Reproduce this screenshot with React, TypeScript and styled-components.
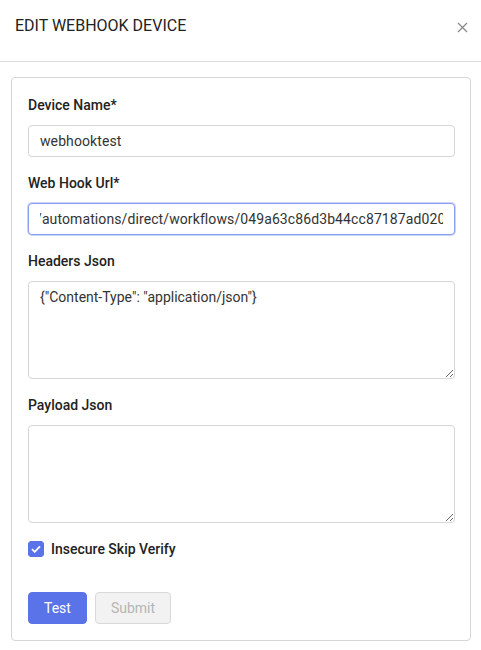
import { FC, useState } from 'react';
import styled, { createGlobalStyle } from 'styled-components';

const GlobalStyle = createGlobalStyle`
  body {
    margin: 0;
    background: #ffffff;
    font-family: Roboto, 'Liberation Sans', Arial, sans-serif;
    color: #222;
  }
  * {
    box-sizing: border-box;
  }
`;

const WEBHOOK_URL = '/automations/direct/workflows/049a63c86d3b44cc87187ad0205c1e7f';

const App: FC = () => {
  const [name, setName] = useState('webhooktest');
  const [url, setUrl] = useState(WEBHOOK_URL);
  const [headers, setHeaders] = useState('{"Content-Type": "application/json"}');
  const [payload, setPayload] = useState('');
  const [skipVerify, setSkipVerify] = useState(true);

  return (
    <>
      <GlobalStyle />
      <StyledHeader>
        <StyledTitle>EDIT WEBHOOK DEVICE</StyledTitle>
        <StyledClose aria-label="close">
          <svg width="11" height="11" viewBox="0 0 11 11">
            <path d="M1 1L10 10M10 1L1 10" stroke="#8a8a8a" strokeWidth="1.3" />
          </svg>
        </StyledClose>
      </StyledHeader>
      <StyledCard>
        <StyledField>
          <StyledLabel>Device Name*</StyledLabel>
          <StyledInput value={name} onChange={e => setName(e.target.value)} />
        </StyledField>
        <StyledField>
          <StyledLabel>Web Hook Url*</StyledLabel>
          <StyledInput focused indent={-4} value={url} onChange={e => setUrl(e.target.value)} />
        </StyledField>
        <StyledField>
          <StyledLabel>Headers Json</StyledLabel>
          <StyledTextArea value={headers} onChange={e => setHeaders(e.target.value)} />
        </StyledField>
        <StyledField>
          <StyledLabel>Payload Json</StyledLabel>
          <StyledTextArea value={payload} onChange={e => setPayload(e.target.value)} />
        </StyledField>
        <StyledCheckRow onClick={() => setSkipVerify(!skipVerify)}>
          <StyledCheckBox checked={skipVerify}>
            {skipVerify && (
              <svg width="10" height="8" viewBox="0 0 10 8">
                <path d="M1 4.2L3.7 6.8L9 1.3" stroke="#fff" strokeWidth="1.8" fill="none" />
              </svg>
            )}
          </StyledCheckBox>
          <StyledCheckLabel>Insecure Skip Verify</StyledCheckLabel>
        </StyledCheckRow>
        <StyledActions>
          <StyledButton variant="primary">Test</StyledButton>
          <StyledButton variant="disabled" disabled>
            Submit
          </StyledButton>
        </StyledActions>
      </StyledCard>
    </>
  );
};

export default App;

const StyledHeader = styled.div`
  display: flex;
  align-items: center;
  justify-content: space-between;
  height: 62px;
  padding: 0 12px 10px 15px;
  border-bottom: 1px solid #dcdcdc;
`;

const StyledTitle = styled.h1`
  margin: 0;
  font-size: 16px;
  font-weight: 400;
  color: #222;
`;

const StyledClose = styled.div`
  display: flex;
  align-items: center;
  justify-content: center;
  width: 14px;
  height: 14px;
  margin-top: 3px;
  cursor: pointer;
`;

const StyledCard = styled.div`
  margin: 15px 10px 10px 11px;
  padding: 17px 15px 16px 16px;
  border: 1px solid #d6d6d6;
  border-radius: 4px;
`;

const StyledField = styled.div`
  display: flex;
  flex-direction: column;
  gap: 10px;
  margin-bottom: 16px;
`;

const StyledLabel = styled.label`
  font-size: 14px;
  line-height: 20px;
  font-weight: 500;
  color: #222;
`;

const StyledInput = styled.input<{ focused?: boolean; indent?: number }>`
  height: 32px;
  width: 100%;
  padding: 0 11px;
  font-family: inherit;
  font-size: 14px;
  letter-spacing: 0.1px;
  color: #333;
  text-indent: ${props => props.indent || 0}px;
  border-radius: 4px;
  border: 1px solid ${props => (props.focused ? '#8c9ef0' : '#d6d6d6')};
  box-shadow: ${props => (props.focused ? '0 0 0 1px rgba(140, 158, 240, 0.45)' : 'none')};
  outline: none;
`;

const StyledTextArea = styled.textarea`
  height: 98px;
  width: 100%;
  padding: 5px 11px;
  font-family: inherit;
  font-size: 14px;
  line-height: 20px;
  color: #333;
  border-radius: 4px;
  border: 1px solid #d6d6d6;
  outline: none;
  resize: vertical;
`;

const StyledCheckRow = styled.div`
  display: flex;
  align-items: center;
  gap: 7px;
  height: 20px;
  margin-top: 2px;
  cursor: pointer;
`;

const StyledCheckBox = styled.span<{ checked: boolean }>`
  display: flex;
  align-items: center;
  justify-content: center;
  width: 16px;
  height: 16px;
  border-radius: 3px;
  background: ${props => (props.checked ? '#5a73e8' : '#fff')};
  border: 1px solid ${props => (props.checked ? '#5a73e8' : '#bbb')};
`;

const StyledCheckLabel = styled.span`
  font-size: 14px;
  font-weight: 500;
  color: #222;
`;

const StyledActions = styled.div`
  display: flex;
  gap: 8px;
  margin-top: 33px;
`;

const StyledButton = styled.button<{ variant: 'primary' | 'disabled' }>`
  height: 32px;
  padding: 0 15px;
  font-family: inherit;
  font-size: 14px;
  border-radius: 4px;
  cursor: ${props => (props.variant === 'primary' ? 'pointer' : 'default')};
  background: ${props => (props.variant === 'primary' ? '#5a73e8' : '#f2f2f2')};
  color: ${props => (props.variant === 'primary' ? '#fff' : '#b5b5b5')};
  border: 1px solid ${props => (props.variant === 'primary' ? '#5a73e8' : '#d9d9d9')};
`;
